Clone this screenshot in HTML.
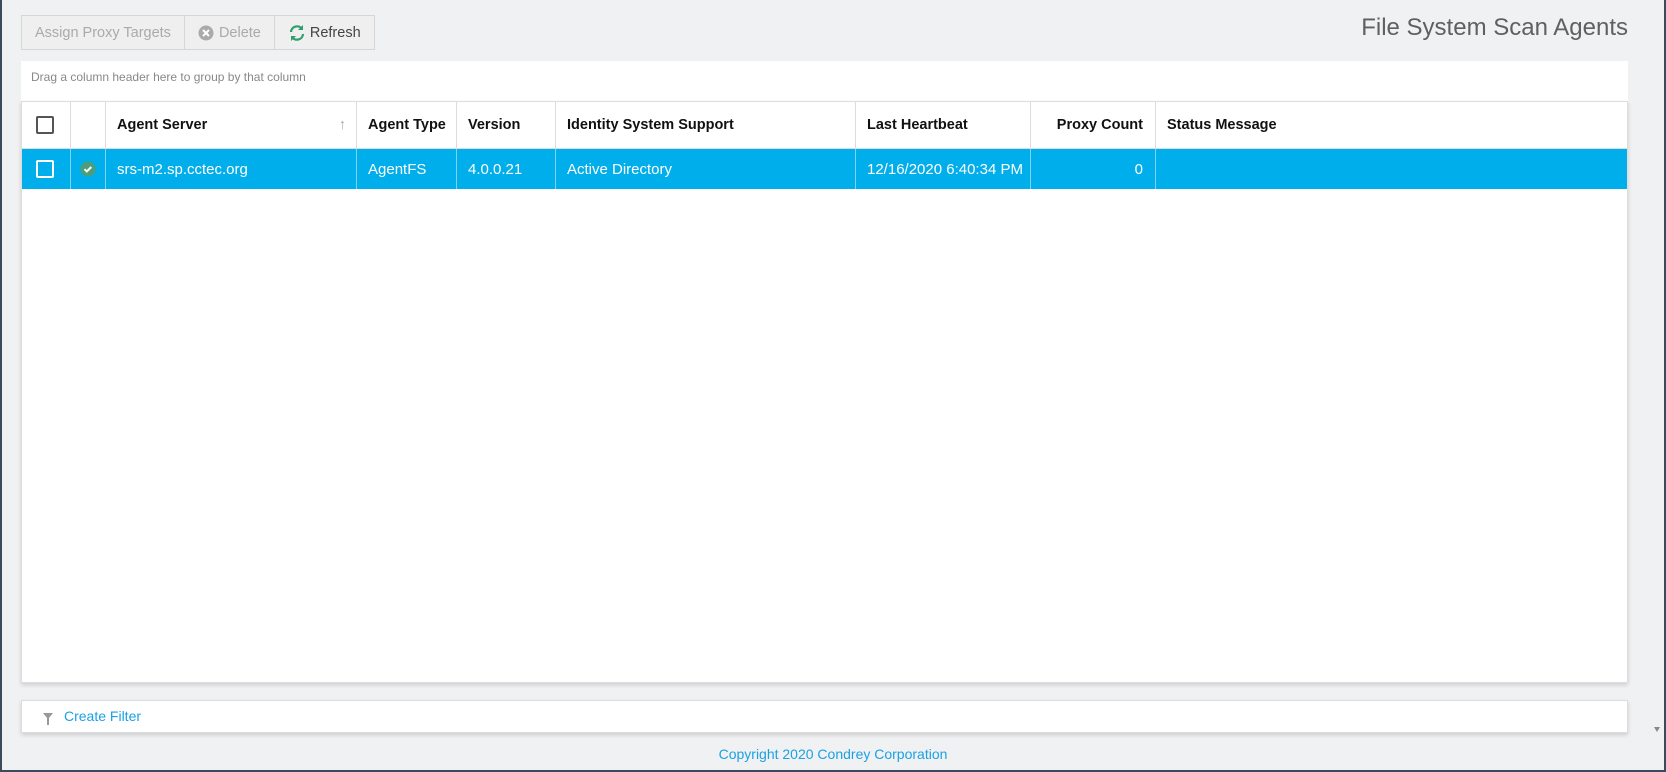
<!DOCTYPE html>
<html><head><style>
*{box-sizing:border-box;margin:0;padding:0}
body{width:1666px;height:772px;background:#f0f1f3;font-family:"Liberation Sans",sans-serif;position:relative;overflow:hidden}
.frame{position:absolute;left:0;top:0;width:1666px;height:772px;border-left:2px solid #3c4b5c;border-right:2px solid #3c4b5c;border-bottom:2px solid #3c4b5c}
.tb{position:absolute;top:15px;left:21px;height:35px;display:flex;border:1px solid #d6d6d6;background:#efefef}
.tb div{height:33px;display:flex;align-items:center;padding:0 13px;font-size:14.5px;color:#aaa;border-right:1px solid #d6d6d6}
.tb div:last-child{border-right:none;color:#444}
.title{position:absolute;right:38px;top:14px;font-size:24px;color:#606060}
.grp{position:absolute;left:21px;top:61px;width:1607px;height:40px;background:#fff;font-size:12px;color:#888;padding:9px 10px}
.grid{position:absolute;left:21px;top:101px;width:1607px;height:582px;background:#fff;border:1px solid #ddd;box-shadow:0 2px 4px rgba(0,0,0,.15)}
.c{position:absolute;top:0;height:100%;display:flex;align-items:center;padding-left:11px;font-size:15px;border-left:1px solid #ddd;white-space:nowrap}
.hd{position:absolute;left:0;top:0;width:100%;height:47px;border-bottom:1px solid #ddd;font-weight:bold;color:#111}
.hd .c{font-size:14.5px}
.row{position:absolute;left:0;top:47px;width:100%;height:40px;background:#00aeeb;color:#fff}
.row .c{border-left:1px solid #7dd3f3}
.cb{width:18px;height:18px;border:2px solid #555;border-radius:2px}
.row .cb{border-color:#fff}
.flt{position:absolute;left:21px;top:700px;width:1607px;height:33px;background:#fff;border:1px solid #ddd;box-shadow:0 2px 4px rgba(0,0,0,.15);font-size:14px;color:#1ba1e2;padding:7px 0 0 42px}
.copy{position:absolute;left:0;width:1666px;top:746px;text-align:center;font-size:14px;color:#1ba1e2}
.arr{position:absolute;left:1654px;top:727px;width:0;height:0;border-left:3px solid transparent;border-right:3px solid transparent;border-top:5px solid #888}
</style></head><body>
<div class="tb"><div>Assign Proxy Targets</div><div><svg width="16" height="16" viewBox="0 0 16 16" style="margin-right:5px"><circle cx="8" cy="8" r="7.5" fill="#aaa"/><path d="M5 5l6 6M11 5l-6 6" stroke="#fff" stroke-width="2"/></svg>Delete</div><div><svg width="18" height="18" viewBox="0 0 18 18" style="margin-right:4px"><path d="M3 8a6 6 0 0 1 11-3M15 10a6 6 0 0 1-11 3" fill="none" stroke="#2e9e6b" stroke-width="2.2"/><path d="M15 1v5h-5zM3 17v-5h5z" fill="#2e9e6b"/></svg>Refresh</div></div>
<div class="title">File System Scan Agents</div>
<div class="grp">Drag a column header here to group by that column</div>
<div class="grid">
 <div class="hd">
  <div class="c" style="left:0;width:49px;border:none;padding-left:14px"><div class="cb"></div></div>
  <div class="c" style="left:48px;width:35px"></div>
  <div class="c" style="left:83px;width:251px">Agent Server<span style="position:absolute;right:10px;color:#aaa;font-weight:normal">↑</span></div>
  <div class="c" style="left:334px;width:100px">Agent Type</div>
  <div class="c" style="left:434px;width:99px">Version</div>
  <div class="c" style="left:533px;width:300px">Identity System Support</div>
  <div class="c" style="left:833px;width:175px">Last Heartbeat</div>
  <div class="c" style="left:1008px;width:125px;justify-content:flex-end;padding-right:12px">Proxy Count</div>
  <div class="c" style="left:1133px;width:472px">Status Message</div>
 </div>
 <div class="row">
  <div class="c" style="left:0;width:49px;border:none;padding-left:14px"><div class="cb"></div></div>
  <div class="c" style="left:48px;width:35px;padding-left:9px"><svg width="16" height="16" viewBox="0 0 16 16"><circle cx="8" cy="8" r="7.5" fill="#4c9e78"/><path d="M4.5 8.2l2.3 2.3 4.5-4.5" fill="none" stroke="#fff" stroke-width="2"/></svg></div>
  <div class="c" style="left:83px;width:251px">srs-m2.sp.cctec.org</div>
  <div class="c" style="left:334px;width:100px">AgentFS</div>
  <div class="c" style="left:434px;width:99px">4.0.0.21</div>
  <div class="c" style="left:533px;width:300px">Active Directory</div>
  <div class="c" style="left:833px;width:175px">12/16/2020 6:40:34 PM</div>
  <div class="c" style="left:1008px;width:125px;justify-content:flex-end;padding-right:12px">0</div>
  <div class="c" style="left:1133px;width:472px"></div>
 </div>
</div>
<div class="flt"><svg width="12" height="14" viewBox="0 0 12 14" style="position:absolute;left:20px;top:11px"><path d="M1 1h10L7 6v7H5V6z" fill="#999"/></svg>Create Filter</div>
<div class="copy">Copyright 2020 Condrey Corporation</div>
<div class="arr"></div>
<div class="frame"></div>
</body></html>
